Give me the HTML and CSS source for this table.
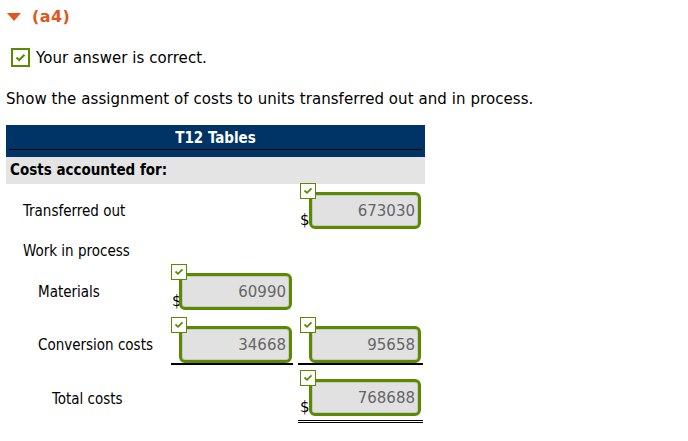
FILE: index.html
```html
<!DOCTYPE html>
<html>
<head>
<meta charset="utf-8">
<link rel="stylesheet" href="styles.css">
</head>
<body>
<div class="page">
  <div class="part-head">
    <span class="tri"></span>
    <span class="part-label">(a4)</span>
  </div>
  <div class="status">
    <span class="ok-box">
      <svg viewBox="0 0 15 15" width="15" height="15"><path d="M3.5 7.5 L6.2 10 L11.5 4.8" fill="none" stroke="#5a8a00" stroke-width="2"/></svg>
    </span>
    <span class="status-text">Your answer is correct.</span>
  </div>
  <p class="prompt">Show the assignment of costs to units transferred out and in process.</p>

  <div class="t12">
    <div class="t12-title"><div class="t12-title-text">T12 Tables</div></div>
    <div class="t12-section">Costs accounted for:</div>

    <div class="row row-transfer">
      <div class="label lvl1">Transferred out</div>
      <div class="cell"></div>
      <div class="cell col2">
        <div class="field">
          <span class="mini-ok"><svg viewBox="0 0 14 14" width="14" height="14"><path d="M3.5 6.5 L6 8.8 L10.5 4.3" fill="none" stroke="#5a8a00" stroke-width="1.8"/></svg></span>
          <span class="dollar">$</span>
          <span class="input">673030</span>
        </div>
      </div>
    </div>

    <div class="row row-wip">
      <div class="label lvl1 plain">Work in process</div>
    </div>

    <div class="row row-mat">
      <div class="label lvl2">Materials</div>
      <div class="cell col1">
        <div class="field">
          <span class="mini-ok"><svg viewBox="0 0 14 14" width="14" height="14"><path d="M3.5 6.5 L6 8.8 L10.5 4.3" fill="none" stroke="#5a8a00" stroke-width="1.8"/></svg></span>
          <span class="dollar">$</span>
          <span class="input">60990</span>
        </div>
      </div>
      <div class="cell"></div>
    </div>

    <div class="row row-conv">
      <div class="label lvl2">Conversion costs</div>
      <div class="cell col1 single">
        <div class="field">
          <span class="mini-ok"><svg viewBox="0 0 14 14" width="14" height="14"><path d="M3.5 6.5 L6 8.8 L10.5 4.3" fill="none" stroke="#5a8a00" stroke-width="1.8"/></svg></span>
          <span class="input">34668</span>
        </div>
      </div>
      <div class="cell col2 single">
        <div class="field">
          <span class="mini-ok"><svg viewBox="0 0 14 14" width="14" height="14"><path d="M3.5 6.5 L6 8.8 L10.5 4.3" fill="none" stroke="#5a8a00" stroke-width="1.8"/></svg></span>
          <span class="input">95658</span>
        </div>
      </div>
    </div>

    <div class="row row-total">
      <div class="label lvl3">Total costs</div>
      <div class="cell"></div>
      <div class="cell col2 double">
        <div class="field">
          <span class="mini-ok"><svg viewBox="0 0 14 14" width="14" height="14"><path d="M3.5 6.5 L6 8.8 L10.5 4.3" fill="none" stroke="#5a8a00" stroke-width="1.8"/></svg></span>
          <span class="dollar">$</span>
          <span class="input">768688</span>
        </div>
      </div>
    </div>
  </div>
</div>
</body>
</html>
```

FILE: styles.css
```css
* { box-sizing: border-box; }
html, body { margin: 0; padding: 0; background: #fff; }
body { font-family: "DejaVu Sans", Verdana, sans-serif; color: #000; }

.page { padding: 0 6px; }

.part-head {
  height: 32px;
  display: flex;
  align-items: center;
}
.tri {
  width: 0; height: 0;
  margin-left: 1px;
  margin-top: 1px;
  border-left: 7px solid transparent;
  border-right: 7px solid transparent;
  border-top: 8px solid #e0561b;
}
.part-label {
  margin-left: 11px;
  color: #e0561b;
  font-weight: bold;
  font-size: 16px;
  letter-spacing: 0.4px;
}

.status {
  margin-top: 16px;
  display: flex;
  align-items: center;
  height: 19px;
}
.ok-box {
  margin-left: 5px;
  width: 19px; height: 19px;
  border: 2px solid #5a8a00;
  background: #fff;
  display: flex;
  align-items: center;
  justify-content: center;
}
.ok-box svg { display: block; }
.status-text {
  margin-left: 6px;
  font-size: 15px;
  letter-spacing: 0.05px;
}

.prompt {
  margin: 22px 0 0;
  font-size: 15px;
  line-height: 20px;
  letter-spacing: 0.07px;
}

.t12 {
  margin-top: 16px;
  width: 419px;
  font-family: "DejaVu Sans Condensed", Tahoma, sans-serif;
  font-size: 15px;
}
.t12-title {
  background: #003366;
  padding: 0 3px 7px;
}
.t12-title-text {
  color: #fff;
  font-weight: bold;
  font-size: 15px;
  text-align: center;
  padding-top: 2px;
  line-height: 22px;
  border-bottom: 1px solid #000;
}
.t12-section {
  background: #e4e4e4;
  height: 27px;
  line-height: 27px;
  padding-left: 4px;
  font-weight: bold;
  font-size: 15px;
}

.row {
  display: grid;
  grid-template-columns: 160px 122px 125px;
  column-gap: 5px;
}
.row-transfer { margin-top: -1px; }
.row-wip { height: 34px; }
.row-conv { margin-top: 6px; }
.row-total { margin-top: 5px; }

.label {
  padding-top: 10px;
  line-height: 37px;
  white-space: nowrap;
}
.label.plain { padding-top: 11px; line-height: 20px; }
.lvl1 { padding-left: 17px; }
.lvl2 { padding-left: 32px; }
.lvl3 { padding-left: 46px; padding-top: 11px; }

.cell.single { border-bottom: 2px solid #000; }
.cell.double { border-bottom: 3px double #000; padding-bottom: 4px; }

.field {
  position: relative;
  padding-top: 9px;
  padding-left: 8px;
  width: 121px;
}
.col2 .field { padding-left: 11px; width: 123px; }

.mini-ok {
  position: absolute;
  top: 0; left: 0;
  width: 16px; height: 16px;
  border: 1.5px solid #5a8a00;
  background: #fff;
  display: flex;
  align-items: center;
  justify-content: center;
  z-index: 2;
}
.col2 .mini-ok { left: 2px; }
.mini-ok svg { display: block; margin-top: -1px; }

.dollar {
  position: absolute;
  left: 1px;
  bottom: -1px;
  font-family: "DejaVu Sans", Verdana, sans-serif;
  font-size: 15px;
  line-height: 20px;
  z-index: 0;
}
.col2 .dollar { left: 2px; }

.input {
  position: relative;
  z-index: 1;
  display: block;
  height: 37px;
  border: 3px solid #5a8a00;
  border-radius: 6px;
  background: #e1e1e1;
  box-shadow: inset 0 0 0 1px #c9c9c9;
  text-align: right;
  padding-right: 3px;
  font-family: "DejaVu Sans", Verdana, sans-serif;
  font-size: 15px;
  line-height: 33px;
  color: #666;
}
```
